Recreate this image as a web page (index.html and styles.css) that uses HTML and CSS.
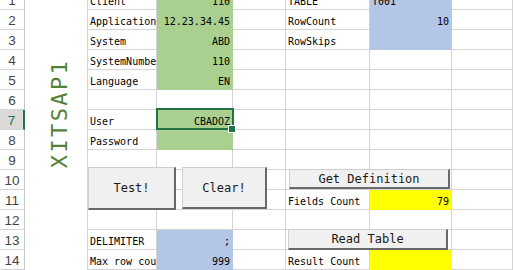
FILE: index.html
```html
<!DOCTYPE html>
<html lang="en">
<head>
    <meta charset="UTF-8">
    <meta name="viewport" content="width=device-width, initial-scale=1.0">
    <title>XITSAP1</title>
    <link rel="stylesheet" href="styles.css">
</head>
<body>
    <div class="sheet">
        <!-- row 1 -->
        <div class="hdr">1</div>
        <div class="title-cell"><span class="title">XITSAP1</span></div>
        <div class="cell">Client</div>
        <div class="cell green num">110</div>
        <div class="cell"></div>
        <div class="cell">TABLE</div>
        <div class="cell blue">T001</div>
        <div class="cell"></div>

        <!-- row 2 -->
        <div class="hdr">2</div>
        <div class="cell">Application</div>
        <div class="cell green num">12.23.34.45</div>
        <div class="cell"></div>
        <div class="cell">RowCount</div>
        <div class="cell blue num">10</div>
        <div class="cell"></div>

        <!-- row 3 -->
        <div class="hdr">3</div>
        <div class="cell">System</div>
        <div class="cell green num">ABD</div>
        <div class="cell"></div>
        <div class="cell">RowSkips</div>
        <div class="cell blue"></div>
        <div class="cell"></div>

        <!-- row 4 -->
        <div class="hdr">4</div>
        <div class="cell">SystemNumber</div>
        <div class="cell green num">110</div>
        <div class="cell"></div>
        <div class="cell"></div>
        <div class="cell"></div>
        <div class="cell"></div>

        <!-- row 5 -->
        <div class="hdr">5</div>
        <div class="cell">Language</div>
        <div class="cell green num">EN</div>
        <div class="cell"></div>
        <div class="cell"></div>
        <div class="cell"></div>
        <div class="cell"></div>

        <!-- row 6 -->
        <div class="hdr">6</div>
        <div class="cell"></div>
        <div class="cell"></div>
        <div class="cell"></div>
        <div class="cell"></div>
        <div class="cell"></div>
        <div class="cell"></div>

        <!-- row 7 -->
        <div class="hdr active">7</div>
        <div class="cell">User</div>
        <div class="cell green num selected">CBADOZ</div>
        <div class="cell"></div>
        <div class="cell"></div>
        <div class="cell"></div>
        <div class="cell"></div>

        <!-- row 8 -->
        <div class="hdr">8</div>
        <div class="cell">Password</div>
        <div class="cell green"></div>
        <div class="cell"></div>
        <div class="cell"></div>
        <div class="cell"></div>
        <div class="cell"></div>

        <!-- row 9 -->
        <div class="hdr">9</div>
        <div class="cell"></div>
        <div class="cell"></div>
        <div class="cell"></div>
        <div class="cell"></div>
        <div class="cell"></div>
        <div class="cell"></div>

        <!-- row 10 -->
        <div class="hdr">10</div>
        <div class="cell"></div>
        <div class="cell"></div>
        <div class="cell"></div>
        <div class="cell"></div>
        <div class="cell"></div>
        <div class="cell"></div>

        <!-- row 11 -->
        <div class="hdr">11</div>
        <div class="cell"></div>
        <div class="cell"></div>
        <div class="cell"></div>
        <div class="cell">Fields Count</div>
        <div class="cell yellow num">79</div>
        <div class="cell"></div>

        <!-- row 12 -->
        <div class="hdr">12</div>
        <div class="cell"></div>
        <div class="cell"></div>
        <div class="cell"></div>
        <div class="cell"></div>
        <div class="cell"></div>
        <div class="cell"></div>

        <!-- row 13 -->
        <div class="hdr">13</div>
        <div class="cell">DELIMITER</div>
        <div class="cell blue num">;</div>
        <div class="cell"></div>
        <div class="cell"></div>
        <div class="cell"></div>
        <div class="cell"></div>

        <!-- row 14 -->
        <div class="hdr">14</div>
        <div class="cell">Max row count</div>
        <div class="cell blue num">999</div>
        <div class="cell"></div>
        <div class="cell">Result Count</div>
        <div class="cell yellow"></div>
        <div class="cell"></div>

        <!-- form buttons floating over the sheet -->
        <button class="btn btn-test">Test!</button>
        <button class="btn btn-clear">Clear!</button>
        <button class="btn btn-def">Get Definition</button>
        <button class="btn btn-read">Read Table</button>
    </div>
</body>
</html>
```

FILE: styles.css
```css
* {
    margin: 0;
    padding: 0;
    box-sizing: border-box;
}

body {
    background: #ffffff;
    overflow: hidden;
    font-family: 'DejaVu Sans Mono', 'Liberation Mono', monospace;
}

.sheet {
    position: relative;
    margin-top: -10px;
    display: grid;
    grid-template-columns: 25px 63px 69px 76px 53px 84px 82px 61px;
    grid-auto-rows: 20px;
}

.hdr {
    display: flex;
    align-items: center;
    justify-content: center;
    font-family: 'Liberation Sans', Arial, sans-serif;
    font-size: 13.5px;
    color: #444444;
    border-right: 1px solid #c6c6c6;
    border-bottom: 1px solid #d4d4d4;
    padding-top: 1px;
}

.hdr.active {
    background: #dadada;
    color: #217346;
    border-right: 2px solid #217346;
}

.title-cell {
    grid-column: 2;
    grid-row: 1 / span 14;
    border-right: 1px solid #d4d4d4;
    display: flex;
    align-items: center;
    justify-content: center;
    padding-bottom: 34px;
    padding-left: 7px;
}

.title {
    transform: rotate(-90deg);
    font-family: 'DejaVu Sans Mono', monospace;
    font-size: 22px;
    letter-spacing: 2.4px;
    color: #538135;
    white-space: nowrap;
}

.cell {
    font-size: 10px;
    color: #000000;
    white-space: nowrap;
    overflow: hidden;
    padding: 0 2px 2px 2px;
    display: flex;
    align-items: flex-end;
    border-right: 1px solid #d4d4d4;
    border-bottom: 1px solid #d4d4d4;
}

.num {
    justify-content: flex-end;
}

.green {
    background: #a9d08e;
    border-color: #a9d08e;
}

.blue {
    background: #b4c6e7;
    border-color: #b4c6e7;
}

.yellow {
    background: #ffff00;
    border-color: #ffff00;
}

.selected {
    position: relative;
    overflow: visible;
}

.selected::before {
    content: '';
    position: absolute;
    top: -2px;
    left: -1px;
    right: -2px;
    bottom: -1px;
    border: 2px solid #217346;
}

.selected::after {
    content: '';
    position: absolute;
    right: -4px;
    bottom: -4px;
    width: 6px;
    height: 6px;
    background: #217346;
    border: 1px solid #ffffff;
}

.btn {
    position: absolute;
    background: #f0f0f0;
    border: 1px solid #cfcfcf;
    border-right: 2px solid #696969;
    border-bottom: 2px solid #696969;
    font-family: 'DejaVu Sans Mono', 'Liberation Mono', monospace;
    font-size: 12px;
    color: #1a1a1a;
}

.btn-test {
    left: 88px;
    top: 177px;
    width: 88px;
    height: 43px;
}

.btn-clear {
    left: 182px;
    top: 177px;
    width: 85px;
    height: 42px;
}

.btn-def {
    left: 289px;
    top: 179px;
    width: 161px;
    height: 20px;
}

.btn-read {
    left: 288px;
    top: 239px;
    width: 160px;
    height: 21px;
}
```
